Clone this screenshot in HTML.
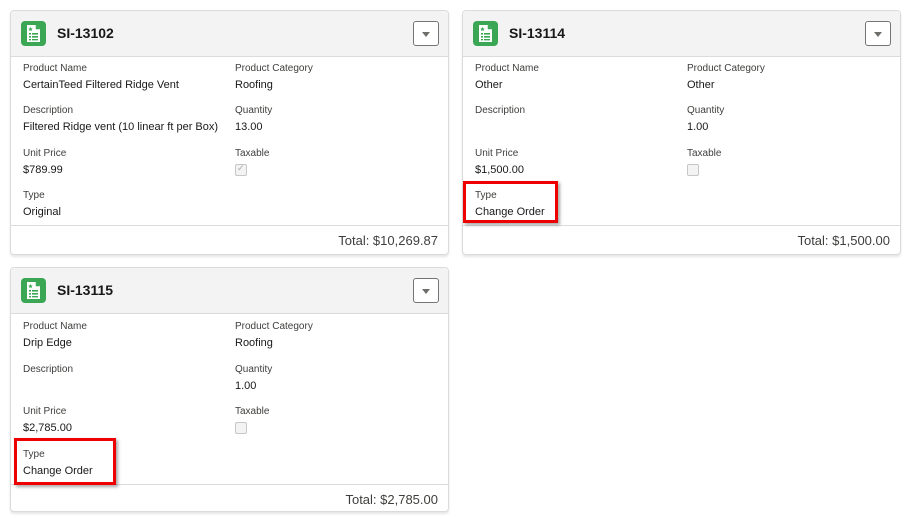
<!DOCTYPE html>
<html><head><meta charset="utf-8"><style>
*{box-sizing:border-box;margin:0;padding:0}
body{width:908px;height:518px;background:#fff;font-family:"Liberation Sans",Arial,sans-serif;color:#181818;position:relative;overflow:hidden}
.card{position:absolute;width:439px;height:245px;border:1px solid #dddbda;border-radius:4px;background:#fff;box-shadow:0 2px 2px rgba(0,0,0,.1)}
.hd{position:absolute;left:0;top:0;right:0;height:46px;background:#f3f3f3;border-bottom:1px solid #dddbda;border-radius:4px 4px 0 0}
.ic{position:absolute;left:10px;top:10px;width:25px;height:25px;background:#3ba755;border-radius:4px}
.tt{position:absolute;left:46px;top:14px;font-size:14px;font-weight:bold;color:#181818}
.dd{position:absolute;right:9px;top:10px;width:26px;height:25px;border:1px solid #747474;border-radius:3px;background:#fff}
.dd:after{content:"";position:absolute;left:8px;top:10px;border-left:4px solid transparent;border-right:4px solid transparent;border-top:5px solid #706e6b}
.l{position:absolute;font-size:10px;color:#3e3e3c;margin-top:1px}
.v{position:absolute;font-size:11px;color:#181818;margin-top:1px}
.ft{position:absolute;left:0;right:0;top:214px;border-top:1px solid #dddbda}
.tot{position:absolute;right:10px;top:222px;font-size:13px;color:#3e3e3c}
.cb{position:absolute;width:12px;height:12px;border:1px solid #c9c7c5;border-radius:2px;background:#f3f3f3}
.red{position:absolute;border:3px solid #e00;box-shadow:2px 2px 3px rgba(0,0,0,.35)}
</style></head><body>
<svg width="0" height="0" style="position:absolute"><defs><symbol id="doc" viewBox="0 0 25 25"><path d="M6 4h9l4 4v13H6z" fill="#fff"/><path d="M15 4v4h4" fill="#3ba755" stroke="#3ba755" stroke-width=".5"/><path d="M8 12h2v1.6H8zM11 12h6v1.6h-6zM8 15h2v1.6H8zM11 15h6v1.6h-6zM8 18h2v1.4H8zM11 18h6v1.4h-6z" fill="#3ba755"/><path d="M9.5 6l.7 1.4 1.5.2-1.1 1 .3 1.5-1.4-.8-1.4.8.3-1.5-1.1-1 1.5-.2z" fill="#3ba755"/></symbol></defs></svg>

<div class="card" style="left:10px;top:10px">
<div class="hd"><div class="ic"><svg width="25" height="25"><use href="#doc"/></svg></div><div class="tt">SI-13102</div><div class="dd"></div></div>
<div class="l" style="left:12px;top:51px">Product Name</div><div class="v" style="left:12px;top:67px">CertainTeed Filtered Ridge Vent</div>
<div class="l" style="left:224px;top:51px">Product Category</div><div class="v" style="left:224px;top:67px">Roofing</div>
<div class="l" style="left:12px;top:93px">Description</div><div class="v" style="left:12px;top:109px">Filtered Ridge vent (10 linear ft per Box)</div>
<div class="l" style="left:224px;top:93px">Quantity</div><div class="v" style="left:224px;top:109px">13.00</div>
<div class="l" style="left:12px;top:136px">Unit Price</div><div class="v" style="left:12px;top:152px">$789.99</div>
<div class="l" style="left:224px;top:136px">Taxable</div><div class="cb" style="left:224px;top:153px"><span style="position:absolute;left:1px;top:-2px;font-size:9px;color:#aaa">✓</span></div>
<div class="l" style="left:12px;top:178px">Type</div><div class="v" style="left:12px;top:194px">Original</div>
<div class="ft"></div><div class="tot">Total: $10,269.87</div>
</div>

<div class="card" style="left:462px;top:10px">
<div class="hd"><div class="ic"><svg width="25" height="25"><use href="#doc"/></svg></div><div class="tt">SI-13114</div><div class="dd"></div></div>
<div class="l" style="left:12px;top:51px">Product Name</div><div class="v" style="left:12px;top:67px">Other</div>
<div class="l" style="left:224px;top:51px">Product Category</div><div class="v" style="left:224px;top:67px">Other</div>
<div class="l" style="left:12px;top:93px">Description</div>
<div class="l" style="left:224px;top:93px">Quantity</div><div class="v" style="left:224px;top:109px">1.00</div>
<div class="l" style="left:12px;top:136px">Unit Price</div><div class="v" style="left:12px;top:152px">$1,500.00</div>
<div class="l" style="left:224px;top:136px">Taxable</div><div class="cb" style="left:224px;top:153px"></div>
<div class="l" style="left:12px;top:178px">Type</div><div class="v" style="left:12px;top:194px">Change Order</div>
<div class="ft"></div><div class="tot">Total: $1,500.00</div>
</div>

<div class="card" style="left:10px;top:267px">
<div class="hd"><div class="ic"><svg width="25" height="25"><use href="#doc"/></svg></div><div class="tt">SI-13115</div><div class="dd"></div></div>
<div class="l" style="left:12px;top:52px">Product Name</div><div class="v" style="left:12px;top:68px">Drip Edge</div>
<div class="l" style="left:224px;top:52px">Product Category</div><div class="v" style="left:224px;top:68px">Roofing</div>
<div class="l" style="left:12px;top:95px">Description</div>
<div class="l" style="left:224px;top:95px">Quantity</div><div class="v" style="left:224px;top:111px">1.00</div>
<div class="l" style="left:12px;top:137px">Unit Price</div><div class="v" style="left:12px;top:153px">$2,785.00</div>
<div class="l" style="left:224px;top:137px">Taxable</div><div class="cb" style="left:224px;top:154px"></div>
<div class="l" style="left:12px;top:180px">Type</div><div class="v" style="left:12px;top:196px">Change Order</div>
<div class="ft" style="top:216px"></div><div class="tot" style="top:224px">Total: $2,785.00</div>
</div>

<div class="red" style="left:463px;top:181px;width:95px;height:42px"></div>
<div class="red" style="left:14px;top:438px;width:102px;height:47px"></div>
</body></html>
